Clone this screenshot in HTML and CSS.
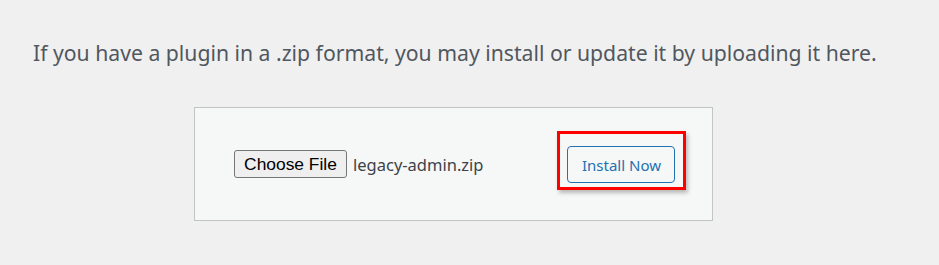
FILE: index.html
```html
<!DOCTYPE html>
<html lang="en">
<head>
    <meta charset="UTF-8">
    <meta name="viewport" content="width=device-width, initial-scale=1.0">
    <title>Upload Plugin</title>
    <link rel="stylesheet" href="styles.css">
</head>
<body>

<div class="upload-plugin">
    <p class="install-help">If you have a plugin in a .zip format, you may install or update it by uploading it here.</p>

    <form class="upload-form" onsubmit="return false">
        <button type="button" class="choose-file">Choose File</button>
        <span class="file-name">legacy-admin.zip</span>
        <span class="highlight">
            <button type="submit" class="install-now">Install Now</button>
        </span>
    </form>
</div>

</body>
</html>
```

FILE: styles.css
```css
* {
    margin: 0;
    padding: 0;
    box-sizing: border-box;
}

body {
    font-family: "Noto Sans", "Open Sans", sans-serif;
    background-color: #f0f0f1;
    color: #50575e;
}

.upload-plugin {
    padding: 37px 0 0 33px;
}

.install-help {
    font-size: 21.2px;
    line-height: 32px;
}

.upload-form {
    display: flex;
    align-items: center;
    width: 519px;
    height: 114px;
    margin: 38px 0 0 161px;
    padding-left: 39px;
    background-color: #f6f7f7;
    border: 1px solid #c3c4c7;
}

.choose-file {
    width: 113px;
    height: 28px;
    padding: 0;
    font-family: "Liberation Sans", Arial, sans-serif;
    font-size: 17.4px;
    color: #000;
    background-color: #efefef;
    border: 1px solid #767676;
    border-radius: 3px;
}

.file-name {
    margin-left: 6px;
    font-size: 16.5px;
    color: #3c434a;
}

.highlight {
    display: block;
    margin: 0 0 7px 74px;
    padding: 12px 8px 4px 7px;
    border: 3px solid #ff0000;
    box-shadow: 2px 3px 4px rgba(0, 0, 0, 0.25);
}

.install-now {
    display: block;
    width: 108px;
    height: 37px;
    font-family: "Noto Sans", "Open Sans", sans-serif;
    font-size: 15px;
    color: #2271b1;
    background-color: #f6f7f7;
    border: 1px solid #2271b1;
    border-radius: 4px;
    cursor: pointer;
}
```
